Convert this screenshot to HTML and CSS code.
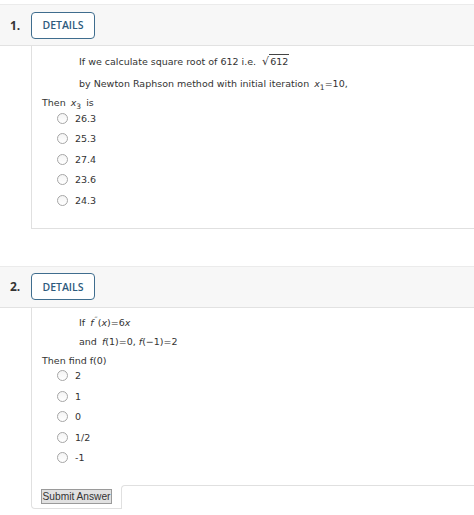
FILE: index.html
```html
<!DOCTYPE html>
<html lang="en">
<head>
  <meta charset="UTF-8">
  <meta name="viewport" content="width=device-width, initial-scale=1.0">
  <title>Assignment</title>
  <link rel="stylesheet" href="styles.css">
</head>
<body>
  <div class="question">
    <div class="q-head">
      <span class="q-num">1.</span>
      <button class="details">DETAILS</button>
    </div>
    <div class="q-body">
      <p class="stem tall">If we calculate square root of 612 i.e. <span class="sqrt"><span class="rad">√</span><span class="radicand">612</span></span></p>
      <p class="stem tall">by Newton Raphson method with initial iteration <span class="math"><i>x</i><sub>1</sub>=10,</span></p>
      <p class="lead">Then <span class="math"><i>x</i><sub>3</sub></span> is</p>
      <ul class="options first">
        <li><span class="radio"></span>26.3</li>
        <li><span class="radio"></span>25.3</li>
        <li><span class="radio"></span>27.4</li>
        <li><span class="radio"></span>23.6</li>
        <li><span class="radio"></span>24.3</li>
      </ul>
    </div>
  </div>

  <div class="question">
    <div class="q-head">
      <span class="q-num">2.</span>
      <button class="details">DETAILS</button>
    </div>
    <div class="q-body open">
      <p class="stem">If <span class="math"><i>f</i><span class="primes">‴</span>(<i>x</i>)=6<i>x</i></span></p>
      <p class="stem">and <span class="math"><i>f</i>(1)=0, <i>f</i>(−1)=2</span></p>
      <p class="lead wide">Then find f(0)</p>
      <ul class="options second">
        <li><span class="radio"></span>2</li>
        <li><span class="radio"></span>1</li>
        <li><span class="radio"></span>0</li>
        <li><span class="radio"></span>1/2</li>
        <li><span class="radio"></span>-1</li>
      </ul>
    </div>
    <div class="q-foot">
      <div class="submit-box"><button class="submit">Submit Answer</button></div>
      <div class="foot-rest"></div>
    </div>
  </div>
</body>
</html>
```

FILE: styles.css
```css
body { margin: 0; padding-top: 4px; font-family: "DejaVu Sans", Verdana, sans-serif; font-size: 9.5px; color: #333; background: #fff; }
p, ul { margin: 0; padding: 0; }

.question { margin-bottom: 37px; }
.question:last-child { margin-bottom: 0; }
.q-head { display: flex; align-items: center; height: 40px; background: #f7f7f7; border-top: 1px solid #ebebeb; border-bottom: 1px solid #e2e2e2; }
.q-num { width: 31px; padding-left: 10px; box-sizing: border-box; font-family: "Open Sans", sans-serif; font-weight: 700; font-size: 12px; color: #333; }
.details { width: 64px; height: 27px; box-sizing: border-box; padding: 0; border: 1.5px solid #3f6d8e; border-radius: 4px; background: #fff; font-family: "Open Sans", sans-serif; font-weight: 600; font-size: 10.5px; color: #2e5b7d; }

.q-body { margin-left: 31px; padding: 5px 0 17px 10px; border-left: 1px solid #e0e0e0; border-bottom: 1px solid #e0e0e0; }
.q-body.open { border-bottom: none; padding-bottom: 17px; }

.stem { padding-left: 37px; line-height: 19px; }
.stem.tall { line-height: 22px; }
.lead { line-height: 16px; }
.lead.wide { line-height: 20px; }

.math { margin: 0 2px; }
.math i { font-style: italic; }
.math sub { font-size: 7.5px; vertical-align: -3px; line-height: 0; }
.primes { font-size: 6px; vertical-align: 5px; line-height: 0; margin-left: 1px; }
.sqrt { display: inline-block; margin-left: 3px; }
.rad { font-size: 11px; }
.radicand { border-top: 1px solid #444; padding: 1px 1px 0 1px; }

.options { list-style: none; padding-left: 15px; }
.options.first { margin-top: -3px; }
.options.second { margin-top: -5px; }
.options li { display: flex; align-items: center; height: 20.5px; }
.radio { width: 9px; height: 9px; margin-right: 7px; border: 1px solid #a6a6a6; border-radius: 50%; background: linear-gradient(#f4f4f4, #fff); }

.q-foot { display: flex; margin-left: 31px; height: 24px; }
.submit-box { width: 90px; padding-left: 9px; box-sizing: border-box; display: flex; align-items: center; border-left: 1px solid #e0e0e0; border-bottom: 1px solid #e0e0e0; border-bottom-left-radius: 4px; }
.foot-rest { flex: 1; border-top: 1px solid #e0e0e0; border-left: 1px solid #e0e0e0; border-top-left-radius: 4px; }
.submit { width: 71px; height: 15px; padding: 0; white-space: nowrap; text-align: center; border: 1px solid #9a9a9a; background: #e1e1e1; font-family: "Liberation Sans", Arial, sans-serif; font-size: 10.2px; color: #333; line-height: 12px; }
```
